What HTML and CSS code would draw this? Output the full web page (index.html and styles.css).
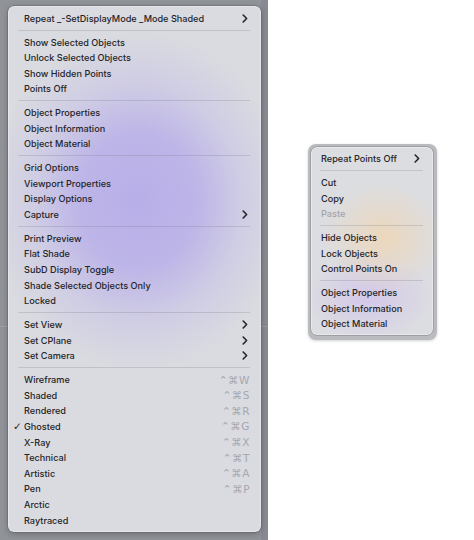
FILE: index.html
```html
<!DOCTYPE html>
<html>
<head>
<meta charset="utf-8">
<link rel="stylesheet" href="styles.css">
</head>
<body>
<div class="stage">
  <div class="left-panel">
    <div class="menu big">
      <div class="row"><span class="label">Repeat _-SetDisplayMode _Mode Shaded</span><svg class="chev" viewBox="0 0 6 9"><path d="M1.2 1 L4.6 4.5 L1.2 8"/></svg></div>
      <div class="sep"></div>
      <div class="row"><span class="label">Show Selected Objects</span></div>
      <div class="row"><span class="label">Unlock Selected Objects</span></div>
      <div class="row"><span class="label">Show Hidden Points</span></div>
      <div class="row"><span class="label">Points Off</span></div>
      <div class="sep"></div>
      <div class="row"><span class="label">Object Properties</span></div>
      <div class="row"><span class="label">Object Information</span></div>
      <div class="row"><span class="label">Object Material</span></div>
      <div class="sep"></div>
      <div class="row"><span class="label">Grid Options</span></div>
      <div class="row"><span class="label">Viewport Properties</span></div>
      <div class="row"><span class="label">Display Options</span></div>
      <div class="row"><span class="label">Capture</span><svg class="chev" viewBox="0 0 6 9"><path d="M1.2 1 L4.6 4.5 L1.2 8"/></svg></div>
      <div class="sep"></div>
      <div class="row"><span class="label">Print Preview</span></div>
      <div class="row"><span class="label">Flat Shade</span></div>
      <div class="row"><span class="label">SubD Display Toggle</span></div>
      <div class="row"><span class="label">Shade Selected Objects Only</span></div>
      <div class="row"><span class="label">Locked</span></div>
      <div class="sep"></div>
      <div class="row"><span class="label">Set View</span><svg class="chev" viewBox="0 0 6 9"><path d="M1.2 1 L4.6 4.5 L1.2 8"/></svg></div>
      <div class="row"><span class="label">Set CPlane</span><svg class="chev" viewBox="0 0 6 9"><path d="M1.2 1 L4.6 4.5 L1.2 8"/></svg></div>
      <div class="row"><span class="label">Set Camera</span><svg class="chev" viewBox="0 0 6 9"><path d="M1.2 1 L4.6 4.5 L1.2 8"/></svg></div>
      <div class="sep"></div>
      <div class="row"><span class="label">Wireframe</span><span class="key">⌃⌘W</span></div>
      <div class="row"><span class="label">Shaded</span><span class="key">⌃⌘S</span></div>
      <div class="row"><span class="label">Rendered</span><span class="key">⌃⌘R</span></div>
      <div class="row"><span class="check">✓</span><span class="label">Ghosted</span><span class="key">⌃⌘G</span></div>
      <div class="row"><span class="label">X-Ray</span><span class="key">⌃⌘X</span></div>
      <div class="row"><span class="label">Technical</span><span class="key">⌃⌘T</span></div>
      <div class="row"><span class="label">Artistic</span><span class="key">⌃⌘A</span></div>
      <div class="row"><span class="label">Pen</span><span class="key">⌃⌘P</span></div>
      <div class="row"><span class="label">Arctic</span></div>
      <div class="row"><span class="label">Raytraced</span></div>
    </div>
  </div>
  <div class="right-area">
    <div class="frame">
      <div class="menu small">
        <div class="row"><span class="label">Repeat Points Off</span><svg class="chev" viewBox="0 0 6 9"><path d="M1.2 1 L4.6 4.5 L1.2 8"/></svg></div>
        <div class="sep"></div>
        <div class="row"><span class="label">Cut</span></div>
        <div class="row"><span class="label">Copy</span></div>
        <div class="row disabled"><span class="label">Paste</span></div>
        <div class="sep"></div>
        <div class="row"><span class="label">Hide Objects</span></div>
        <div class="row"><span class="label">Lock Objects</span></div>
        <div class="row"><span class="label">Control Points On</span></div>
        <div class="sep"></div>
        <div class="row"><span class="label">Object Properties</span></div>
        <div class="row"><span class="label">Object Information</span></div>
        <div class="row"><span class="label">Object Material</span></div>
      </div>
    </div>
  </div>
</div>
</body>
</html>
```

FILE: styles.css
```css
html, body {
  margin: 0;
  padding: 0;
  background: #ffffff;
}
.stage {
  display: flex;
  width: 474px;
  height: 540px;
  overflow: hidden;
  font-family: "Inter", "Liberation Sans", sans-serif;
  font-weight: 500;
  font-size: 9.15px;
  color: #242428;
}
.left-panel {
  width: 268px;
  height: 540px;
  box-sizing: border-box;
  padding: 6px 7px 0 8px;
  background:
    linear-gradient(to bottom, transparent 326px, rgba(255,255,255,0.12) 326px, rgba(255,255,255,0.12) 327px, transparent 327px),
    linear-gradient(to right, #909398 0, #909398 261px, #878a90 261px);
}
.menu {
  box-sizing: border-box;
  border-radius: 6px;
  box-shadow: 0 0 0 0.5px rgba(80,80,90,0.6), inset 0 0 0 1px rgba(255,255,255,0.35), 0 2px 6px rgba(0,0,0,0.25);
}
.menu.big {
  width: 253px;
  height: 526px;
  padding: 4.5px 0 3px;
  background:
    radial-gradient(ellipse 150px 170px at 130px 195px, rgba(178,167,234,0.86) 0%, rgba(180,170,234,0.76) 40%, rgba(192,184,234,0.4) 70%, rgba(205,200,232,0) 100%),
    #dadbe0;
}
.row {
  height: 15.62px;
  display: flex;
  align-items: center;
  position: relative;
  padding: 0 11px 0 16px;
  white-space: nowrap;
}
.label {
  flex: 1;
}
.check {
  position: absolute;
  left: 5px;
  font-family: "DejaVu Sans", sans-serif;
  font-size: 10.5px;
  font-weight: 700;
}
.key {
  color: #a6a7ad;
  font-family: "DejaVu Sans", sans-serif;
  font-weight: 400;
  font-size: 10.5px;
  letter-spacing: 0.5px;
}
.chev {
  width: 6px;
  height: 9px;
  margin-right: 2px;
  fill: none;
  stroke: #242428;
  stroke-width: 1.6;
  stroke-linecap: round;
  stroke-linejoin: round;
}
.sep {
  height: 8.2px;
  display: flex;
  align-items: center;
  margin: 0 11px 0 10px;
}
.sep::before {
  content: "";
  flex: 1;
  height: 1px;
  background: rgba(120,120,135,0.26);
}
.right-area {
  flex: 1;
  padding: 144px 0 0 40px;
}
.frame {
  width: 129px;
  box-sizing: border-box;
  padding: 3px 4px 5px 3px;
  border-radius: 8px;
  background: #b9bbbe;
  box-shadow: 0 1px 3px rgba(0,0,0,0.18);
}
.menu.small {
  width: 122px;
  padding: 4px 0 3px;
  box-shadow: 0 0 0 0.5px rgba(90,90,100,0.55), inset 0 0 0 1px rgba(255,255,255,0.35);
  background:
    radial-gradient(ellipse 60px 55px at 72px 90px, rgba(240,214,178,0.8) 0%, rgba(240,214,178,0.35) 55%, rgba(240,214,178,0) 100%),
    radial-gradient(ellipse 65px 45px at 58px 150px, rgba(208,192,236,0.75) 0%, rgba(208,192,236,0) 100%),
    #dcdde1;
}
.menu.small .row {
  padding: 0 11px 0 10px;
}
.menu.small .sep {
  margin: 0 10px 0 9px;
}
.row.disabled {
  color: #a4a4aa;
}
```
